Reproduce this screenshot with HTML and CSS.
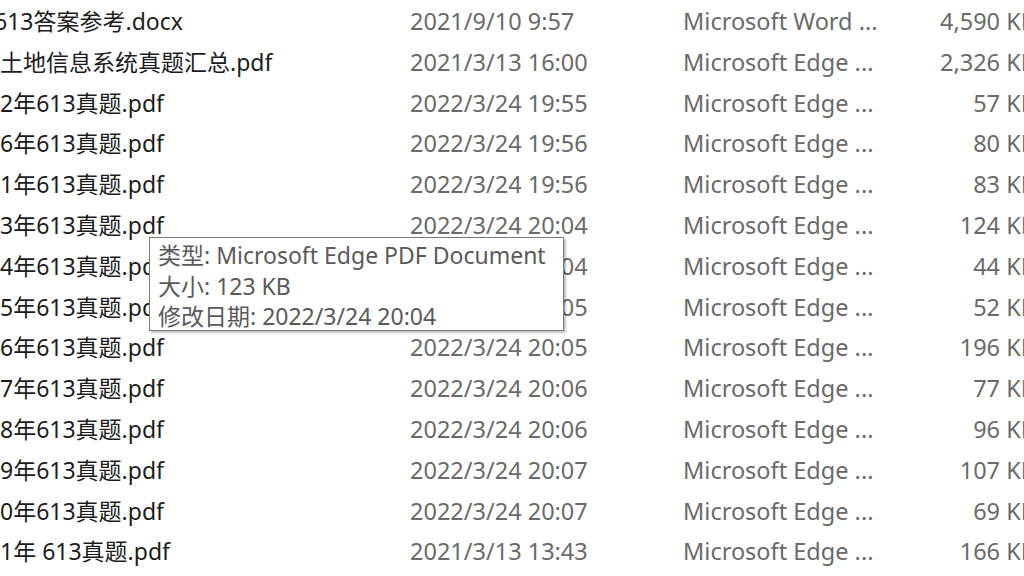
FILE: index.html
```html
<!DOCTYPE html>
<html lang="zh-CN">
<head>
<meta charset="utf-8">
<title>文件列表</title>
<link rel="stylesheet" href="styles.css">
</head>
<body>
<div class="list">
  <div class="row"><span class="name clip">613答案参考.docx</span><span class="date">2021/9/10 9:57</span><span class="type">Microsoft Word ...</span><span class="size">4,590 KB</span></div>
  <div class="row"><span class="name">土地信息系统真题汇总.pdf</span><span class="date">2021/3/13 16:00</span><span class="type">Microsoft Edge ...</span><span class="size">2,326 KB</span></div>
  <div class="row"><span class="name">2年613真题.pdf</span><span class="date">2022/3/24 19:55</span><span class="type">Microsoft Edge ...</span><span class="size">57 KB</span></div>
  <div class="row"><span class="name">6年613真题.pdf</span><span class="date">2022/3/24 19:56</span><span class="type">Microsoft Edge ...</span><span class="size">80 KB</span></div>
  <div class="row"><span class="name">1年613真题.pdf</span><span class="date">2022/3/24 19:56</span><span class="type">Microsoft Edge ...</span><span class="size">83 KB</span></div>
  <div class="row"><span class="name">3年613真题.pdf</span><span class="date">2022/3/24 20:04</span><span class="type">Microsoft Edge ...</span><span class="size">124 KB</span></div>
  <div class="row"><span class="name">4年613真题.pdf</span><span class="date">2022/3/24 20:04</span><span class="type">Microsoft Edge ...</span><span class="size">44 KB</span></div>
  <div class="row"><span class="name">5年613真题.pdf</span><span class="date">2022/3/24 20:05</span><span class="type">Microsoft Edge ...</span><span class="size">52 KB</span></div>
  <div class="row"><span class="name">6年613真题.pdf</span><span class="date">2022/3/24 20:05</span><span class="type">Microsoft Edge ...</span><span class="size">196 KB</span></div>
  <div class="row"><span class="name">7年613真题.pdf</span><span class="date">2022/3/24 20:06</span><span class="type">Microsoft Edge ...</span><span class="size">77 KB</span></div>
  <div class="row"><span class="name">8年613真题.pdf</span><span class="date">2022/3/24 20:06</span><span class="type">Microsoft Edge ...</span><span class="size">96 KB</span></div>
  <div class="row"><span class="name">9年613真题.pdf</span><span class="date">2022/3/24 20:07</span><span class="type">Microsoft Edge ...</span><span class="size">107 KB</span></div>
  <div class="row"><span class="name">0年613真题.pdf</span><span class="date">2022/3/24 20:07</span><span class="type">Microsoft Edge ...</span><span class="size">69 KB</span></div>
  <div class="row"><span class="name">1年 613真题.pdf</span><span class="date">2021/3/13 13:43</span><span class="type">Microsoft Edge ...</span><span class="size">166 KB</span></div>
</div>
<div class="tooltip">
  <div class="tip-line">类型: Microsoft Edge PDF Document</div>
  <div class="tip-line">大小: 123 KB</div>
  <div class="tip-line">修改日期: 2022/3/24 20:04</div>
</div>
</body>
</html>
```
FILE: styles.css
```css
html, body {
  margin: 0;
  padding: 0;
  background: #ffffff;
  overflow: hidden;
  width: 1024px;
  height: 576px;
}
body {
  position: relative;
  font-family: "Noto Sans", "Noto Sans CJK SC", sans-serif;
}
.list {
  width: 1040px;
  padding-top: 1px;
}
.row {
  display: grid;
  grid-template-columns: 410px 273px 220px 133px;
  height: 40.8px;
  align-items: center;
  font-size: 23px;
  line-height: 40.8px;
  white-space: nowrap;
}
.name {
  color: #1c1c1c;
}
.clip {
  text-indent: -6px;
}
.date, .type, .size {
  color: #6a6a6a;
  font-size: 23.5px;
}
.size {
  text-align: right;
}
.tooltip {
  position: absolute;
  left: 149px;
  top: 237px;
  width: 397px;
  padding: 2px 8px 0 8px;
  height: 90px;
  background: #ffffff;
  border: 1.5px solid #7a7a7a;
  box-shadow: 2px 2px 2px rgba(0,0,0,0.25);
  color: #5a5a5a;
  font-size: 23px;
}
.tip-line {
  line-height: 30.5px;
  white-space: nowrap;
}
```
